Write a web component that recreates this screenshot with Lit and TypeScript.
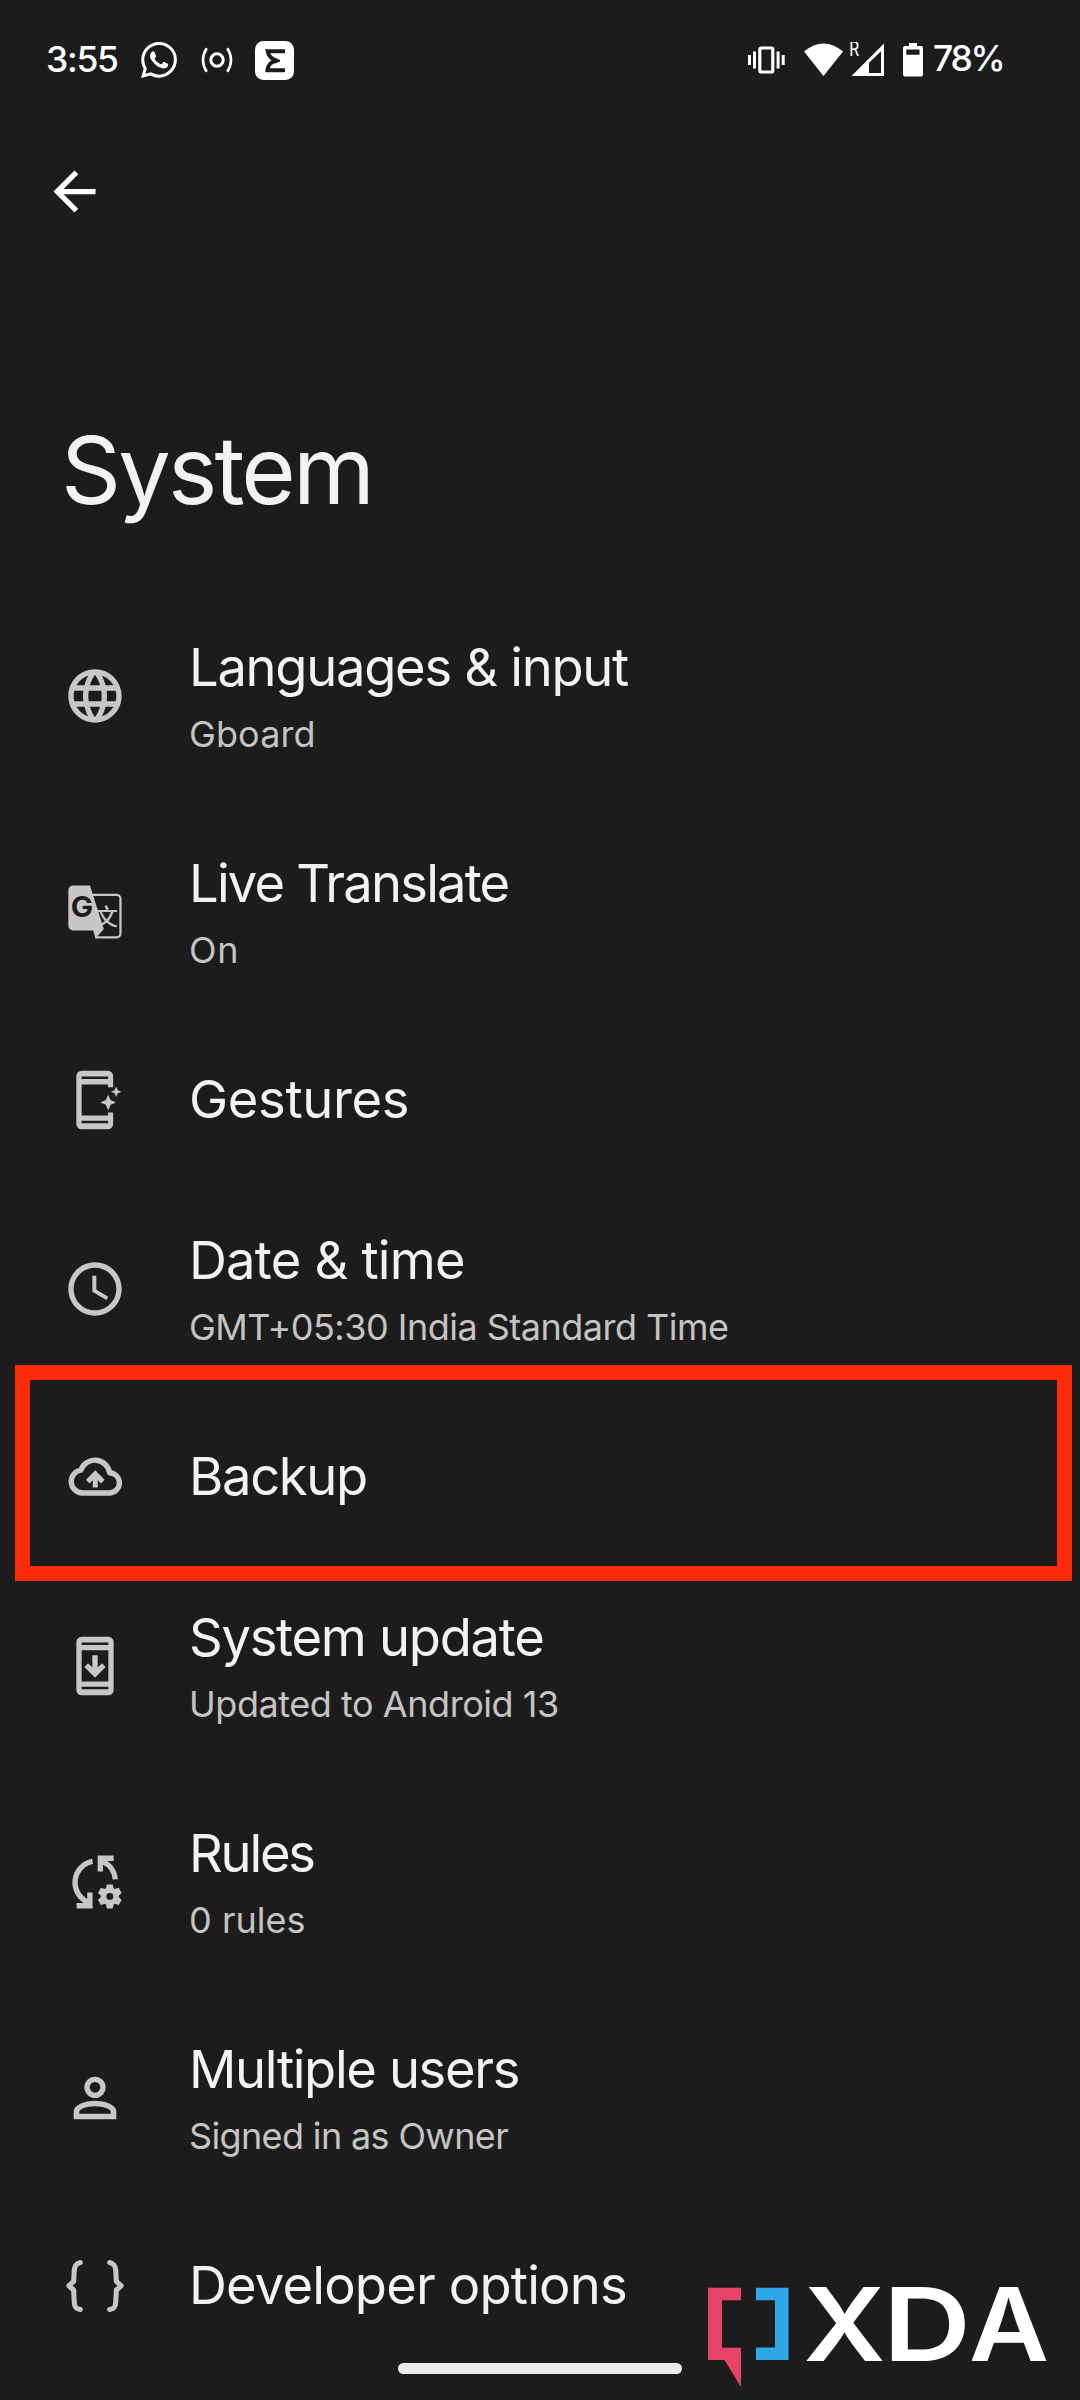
import { LitElement, html, svg, css, nothing, type TemplateResult } from "lit";
import { customElement, property } from "lit/decorators.js";

type Shape = TemplateResult;

interface Entry {
  icon: string;
  title: string;
  titleTracking: number;
  detail?: string;
  detailTracking?: number;
  marked?: boolean;
}

const phone = svg`<path fill-rule="evenodd" d="M7 1h10a2 2 0 0 1 2 2v18a2 2 0 0 1-2 2H7a2 2 0 0 1-2-2V3a2 2 0 0 1 2-2zM7 3.2v.9h10v-.9zM7 6.1v11.7h10V6.1zM7 19.8v.9h10v-.9z"/>`;

const icons: Record<string, Shape> = {
  globe: svg`<path d="M11.99 2C6.47 2 2 6.48 2 12s4.47 10 9.99 10C17.52 22 22 17.52 22 12S17.52 2 11.99 2zm6.93 6h-2.95a15.65 15.65 0 0 0-1.38-3.56A8.03 8.03 0 0 1 18.92 8zM12 4.04c.83 1.2 1.48 2.53 1.91 3.96h-3.82c.43-1.43 1.08-2.76 1.91-3.96zM4.26 14C4.1 13.36 4 12.69 4 12s.1-1.36.26-2h3.38c-.08.66-.14 1.32-.14 2s.06 1.34.14 2H4.26zm.82 2h2.95c.32 1.25.78 2.45 1.38 3.56A7.99 7.99 0 0 1 5.08 16zm2.95-8H5.08a7.99 7.99 0 0 1 4.33-3.56A15.65 15.65 0 0 0 8.03 8zM12 19.96c-.83-1.2-1.48-2.53-1.91-3.96h3.82A13.6 13.6 0 0 1 12 19.96zM14.34 14H9.66c-.09-.66-.16-1.32-.16-2s.07-1.35.16-2h4.68c.09.65.16 1.32.16 2s-.07 1.34-.16 2zm.25 5.56c.6-1.11 1.06-2.31 1.38-3.56h2.95a8.03 8.03 0 0 1-4.33 3.56zM16.36 14c.08-.66.14-1.32.14-2s-.06-1.34-.14-2h3.38c.16.64.26 1.31.26 2s-.1 1.36-.26 2h-3.38z"/>`,
  translate: svg`
    <path d="M3.7 2.1h6.4l5.2 16.3-3.1 3.5-.9-3H3.7A1.7 1.7 0 0 1 2 17.200V3.800a1.700 1.700 0 0 1 1.700-1.700z"/>
    <path d="M11 5.600h9.100a1.450 1.450 0 0 1 1.450 1.450v13a1.450 1.450 0 0 1-1.450 1.450h-8" fill="none" stroke="currentColor" stroke-width=".85"/>
    <text x="2.9" y="13.7" font-family="Inter, sans-serif" font-weight="700" font-size="10.8" textLength="8.4" lengthAdjust="spacingAndGlyphs" fill="#1c1c1c">G</text>
    <text x="12" y="16.800" font-family="'Noto Sans CJK SC', sans-serif" font-weight="500" font-size="8.600">文</text>`,
  gestures: svg`
    <path fill-rule="evenodd" d="M7 1h9.800a2 2 0 0 1 2 2v4.200h-1.900V6.200H7v11.600h9.900v-1.100h1.900V21a2 2 0 0 1-2 2H7a2 2 0 0 1-2-2V3a2 2 0 0 1 2-2zM7 3.200v.9h9.900v-.9zM7 19.800v.9h9.900v-.9z"/>
    <path d="M16.950 10l.9 2 2 .9-2 .9-.9 2.100-.9-2.100-2-.9 2-.9zM19.950 6.900l.6 1.400 1.400.6-1.400.6-.6 1.400-.6-1.400-1.400-.6 1.400-.6z"/>`,
  clock: svg`<path d="M11.990 2C6.470 2 2 6.480 2 12s4.470 10 9.990 10C17.520 22 22 17.520 22 12S17.520 2 11.990 2zM12 20c-4.420 0-8-3.580-8-8s3.580-8 8-8 8 3.580 8 8-3.580 8-8 8zM12.500 7H11v6l5.250 3.150.75-1.230-4.500-2.670z"/>`,
  cloud: svg`
    <path d="M7.300 18H17.200A3.800 3.800 0 0 0 17.500 10.400 5.600 5.600 0 0 0 6.700 9.400 4.330 4.330 0 0 0 7.300 18z" fill="none" stroke="currentColor" stroke-width="2" stroke-linejoin="round"/>
    <path d="M12.100 9.500l3.500 3.500-1.300 1.400-1.250-1.200v2.700h-1.900v-2.700l-1.250 1.200-1.300-1.400z"/>`,
  update: svg`${phone}<path d="M16 12.400l-4 4-4-4 1.400-1.400 1.600 1.600V8h2v4.600l1.600-1.600z"/>`,
  rules: svg`
    <path d="M11.100 4.300a8 8 0 0 0-1.800 15.200M19.600 11a8 8 0 0 0-4.700-6.700" fill="none" stroke="currentColor" stroke-width="2"/>
    <path d="M5.100 21.900v-2h4v-4h2v6zM19 2.100v2h-4v4h-2v-6z"/>
    <circle cx="17.550" cy="17.400" r="2.350" fill="none" stroke="currentColor" stroke-width="2.100"/>
    ${[0, 60, 120, 180, 240, 300].map(
      (a) => svg`<path d="M16.450 12.900h2.200l.45 1.900h-3.100z" transform="rotate(${a} 17.550 17.400)"/>`
    )}`,
  person: svg`
    <circle cx="12" cy="8" r="3" fill="none" stroke="currentColor" stroke-width="2"/>
    <path fill-rule="evenodd" d="M4 20v-3.100C4 14.700 8 13 12 13s8 1.700 8 3.900V20zM6.100 17.900h11.800v-.8c0-.9-2.800-2-5.900-2s-5.900 1.100-5.900 2z"/>`,
  braces: svg`
    <g fill="none" stroke="currentColor" stroke-width="1.900" stroke-linecap="round" stroke-linejoin="round">
      <path d="M6.500 3.200C4.700 3.700 4.300 4.600 4.200 6.400L4 10.300 2.200 11.900 4 13.500 4.200 17.900C4.300 20 4.800 20.400 6.500 20.800"/>
      <path d="M17.500 3.200C19.300 3.700 19.700 4.600 19.800 6.400L20 10.300 21.800 11.900 20 13.500 19.800 17.900C19.700 20 19.200 20.400 17.500 20.800"/>
    </g>`,
};

const entries: Entry[] = [
  { icon: "globe", title: "Languages & input", titleTracking: -1.29, detail: "Gboard", detailTracking: 0.1 },
  { icon: "translate", title: "Live Translate", titleTracking: -1.8, detail: "On", detailTracking: 0.6 },
  { icon: "gestures", title: "Gestures", titleTracking: -0.36 },
  { icon: "clock", title: "Date & time", titleTracking: -0.79, detail: "GMT+05:30 India Standard Time", detailTracking: -0.51 },
  { icon: "cloud", title: "Backup", titleTracking: -1.34, marked: true },
  { icon: "update", title: "System update", titleTracking: -1.27, detail: "Updated to Android 13", detailTracking: -0.45 },
  { icon: "rules", title: "Rules", titleTracking: -2.2, detail: "0 rules", detailTracking: 0.04 },
  { icon: "person", title: "Multiple users", titleTracking: -1.35, detail: "Signed in as Owner", detailTracking: -0.64 },
  { icon: "braces", title: "Developer options", titleTracking: -0.82 },
];

@customElement("status-bar")
class StatusBar extends LitElement {
  static styles = css`
    :host { display: flex; height: 120px; align-items: center; color: #fff; font: 500 35.5px/40px Inter, sans-serif; }
    .left, .right { display: flex; align-items: center; }
    .left { flex: 1; padding-left: 46px; }
    .right { width: 332px; }
    .time { width: 95px; letter-spacing: -1.32px; padding-bottom: 1px; }
    .charge { letter-spacing: -2.3px; padding-bottom: 2px; margin-left: 10px; }
    svg { display: block; fill: currentColor; }
    .cast { margin: 0 21px 0 23px; }
    .wifi { margin: 0 7px 0 19px; }
    .battery { margin-left: 19px; }
  `;
  render() {
    return html`
      <div class="left">
        <span class="time">3:55</span>
        <svg width="36" height="36" viewBox="0 0 24 24"><path d="M17.472 14.382c-.297-.149-1.758-.867-2.030-.967-.273-.099-.471-.148-.670.150-.197.297-.767.966-.940 1.164-.173.199-.347.223-.644.075-.297-.150-1.255-.463-2.390-1.475-.883-.788-1.480-1.761-1.653-2.059-.173-.297-.018-.458.130-.606.134-.133.298-.347.446-.520.149-.174.198-.298.298-.497.099-.198.050-.371-.025-.520-.075-.149-.669-1.612-.916-2.207-.242-.579-.487-.500-.669-.510-.173-.008-.371-.010-.570-.010-.198 0-.520.074-.792.372-.272.297-1.040 1.016-1.040 2.479 0 1.462 1.065 2.875 1.213 3.074.149.198 2.096 3.200 5.077 4.487.709.306 1.262.489 1.694.625.712.227 1.360.195 1.871.118.571-.085 1.758-.719 2.006-1.413.248-.694.248-1.289.173-1.413-.074-.124-.272-.198-.570-.347m-5.421 7.403h-.004a9.870 9.870 0 0 1-5.031-1.378l-.361-.214-3.741.982.998-3.648-.235-.374a9.860 9.860 0 0 1-1.510-5.260c.001-5.450 4.436-9.884 9.888-9.884 2.640 0 5.122 1.030 6.988 2.898a9.825 9.825 0 0 1 2.893 6.994c-.003 5.450-4.437 9.884-9.885 9.884m8.413-18.297A11.815 11.815 0 0 0 12.050 0C5.495 0 .160 5.335.157 11.892c0 2.096.547 4.142 1.588 5.945L.057 24l6.305-1.654a11.882 11.882 0 0 0 5.683 1.448h.005c6.554 0 11.890-5.335 11.893-11.893a11.821 11.821 0 0 0-3.480-8.413z"/></svg>
        <svg class="cast" width="34" height="34" viewBox="0 0 34 34" fill="none">
          <g fill="none" stroke="currentColor" stroke-width="3"><circle cx="17" cy="17" r="6.200"/><path d="M6.700 5.200q-7.400 11.800 0 23.600M27.300 5.200q7.400 11.800 0 23.600" stroke-width="2.600"/></g>
        </svg>
        <svg width="39" height="39" viewBox="0 0 39 39"><rect width="39" height="39" rx="8.500"/><path d="M30 10.200H12.600C13.600 15.200 17 18.600 22.500 19.700 16 20.300 12.600 24.200 12.400 29.200H30" fill="none" stroke="#1c1c1c" stroke-width="3.900"/><path d="M18 17.400l7 1.300v2L17 22z" fill="#1c1c1c"/></svg>
      </div>
      <div class="right">
        <svg width="37" height="28" viewBox="0 0 37 28"><rect x="11.800" y="2" width="13" height="24" rx="1.500" fill="none" stroke="currentColor" stroke-width="3.200"/><path d="M5 5.500h3v17H5zM28.600 5.500h3v17h-3zM0 9h3v10H0zM33.700 9h3v10h-3z"/></svg>
        <svg class="wifi" width="39" height="36" viewBox="0 0 39 36"><path d="M0 9.500Q19.500-6.500 39 9.500L19.500 34z"/></svg>
        <svg width="34" height="36" viewBox="0 0 34 36"><path fill-rule="evenodd" d="M34 1.500V34H1.500zM31 9.300L19 20.800v10.300h12z"/><text transform="translate(-.8 14.400) scale(.78 1)" font-family="Roboto, sans-serif" font-weight="400" font-size="20.500">R</text></svg>
        <svg class="battery" width="20" height="36" viewBox="0 0 20 36"><path fill-rule="evenodd" d="M6 1h8v3h4a2 2 0 0 1 2 2v26.500a2 2 0 0 1-2 2H2a2 2 0 0 1-2-2V6a2 2 0 0 1 2-2h4zM3.300 7.500v5.200h13.200V7.500z"/></svg>
        <span class="charge">78%</span>
      </div>`;
  }
}

@customElement("setting-row")
class SettingRow extends LitElement {
  @property({ attribute: false }) entry!: Entry;
  static styles = css`
    :host { display: block; }
    .row { position: relative; display: flex; height: 161px; box-sizing: border-box; }
    .tall { height: 216px; }
    .icon { width: 189px; flex: none; box-sizing: border-box; padding-left: 62.5px; display: flex; align-items: center; color: #c8c6c7; }
    svg { width: 64px; height: 64px; fill: currentColor; display: block; }
    .copy { padding-top: 47px; display: flex; flex-direction: column; gap: 10px; white-space: nowrap; }
    .title { font-size: 52.5px; line-height: 64px; color: #f3f1f2; }
    .detail { font-size: 36px; line-height: 50px; color: #c5c3c4; }
    .mark { position: absolute; inset: -32px 8.500px -23px 14.500px; border: 15px solid #ff2a07; }
  `;
  render() {
    const e = this.entry;
    return html`<div class="row ${e.detail ? "tall" : ""}">
      <div class="icon"><svg viewBox="0 0 24 24">${icons[e.icon]}</svg></div>
      <div class="copy">
        <div class="title" style="letter-spacing:${e.titleTracking}px">${e.title}</div>
        ${e.detail ? html`<div class="detail" style="letter-spacing:${e.detailTracking}px">${e.detail}</div>` : nothing}
      </div>
      ${e.marked ? html`<div class="mark"></div>` : nothing}
    </div>`;
  }
}

@customElement("app-root")
class AppRoot extends LitElement {
  static styles = css`
    :host { display: block; position: relative; width: 1080px; height: 2400px; overflow: hidden; background: #1c1c1c; font-family: Inter, sans-serif; }
    .toolbar { padding: 40px 0 0 42.500px; }
    .toolbar svg { display: block; width: 63px; height: 63px; fill: #fff; }
    h1 { margin: 186.500px 0 58px 61px; font-size: 93.500px; line-height: 120px; font-weight: 400; letter-spacing: -2.820px; color: #f3f1f2; }
    .pill { position: absolute; left: 398px; top: 2363px; width: 284px; height: 11px; border-radius: 6px; background: #ececec; }
    .brand { position: absolute; left: 700px; top: 2280px; width: 360px; height: 110px; }
  `;
  render() {
    return html`
      <status-bar></status-bar>
      <div class="toolbar"><svg viewBox="0 0 24 24"><path d="M20 11H7.830l5.590-5.590L12 4l-8 8 8 8 1.410-1.410L7.830 13H20z"/></svg></div>
      <h1>System</h1>
      ${entries.map((e) => html`<setting-row .entry=${e}></setting-row>`)}
      <div class="pill"></div>
      <svg class="brand" viewBox="700 2280 360 110">
        <path fill="#e54467" d="M708 2287.700h33v12.500h-19v47.500h19V2387l-16.500-27H708z"/>
        <path fill="#2ea8e6" d="M756 2287.700h32.500V2360H756v-12.500h19v-47.300h-19z"/>
        <g fill="#fff" font-family="Inter, sans-serif" font-weight="600" font-size="102">
          <text x="803.500" y="2361" textLength="82" lengthAdjust="spacingAndGlyphs">X</text>
          <text x="883" y="2361" textLength="88" lengthAdjust="spacingAndGlyphs">D</text>
          <text x="969" y="2361" textLength="80" lengthAdjust="spacingAndGlyphs">A</text>
        </g>
      </svg>`;
  }
}
